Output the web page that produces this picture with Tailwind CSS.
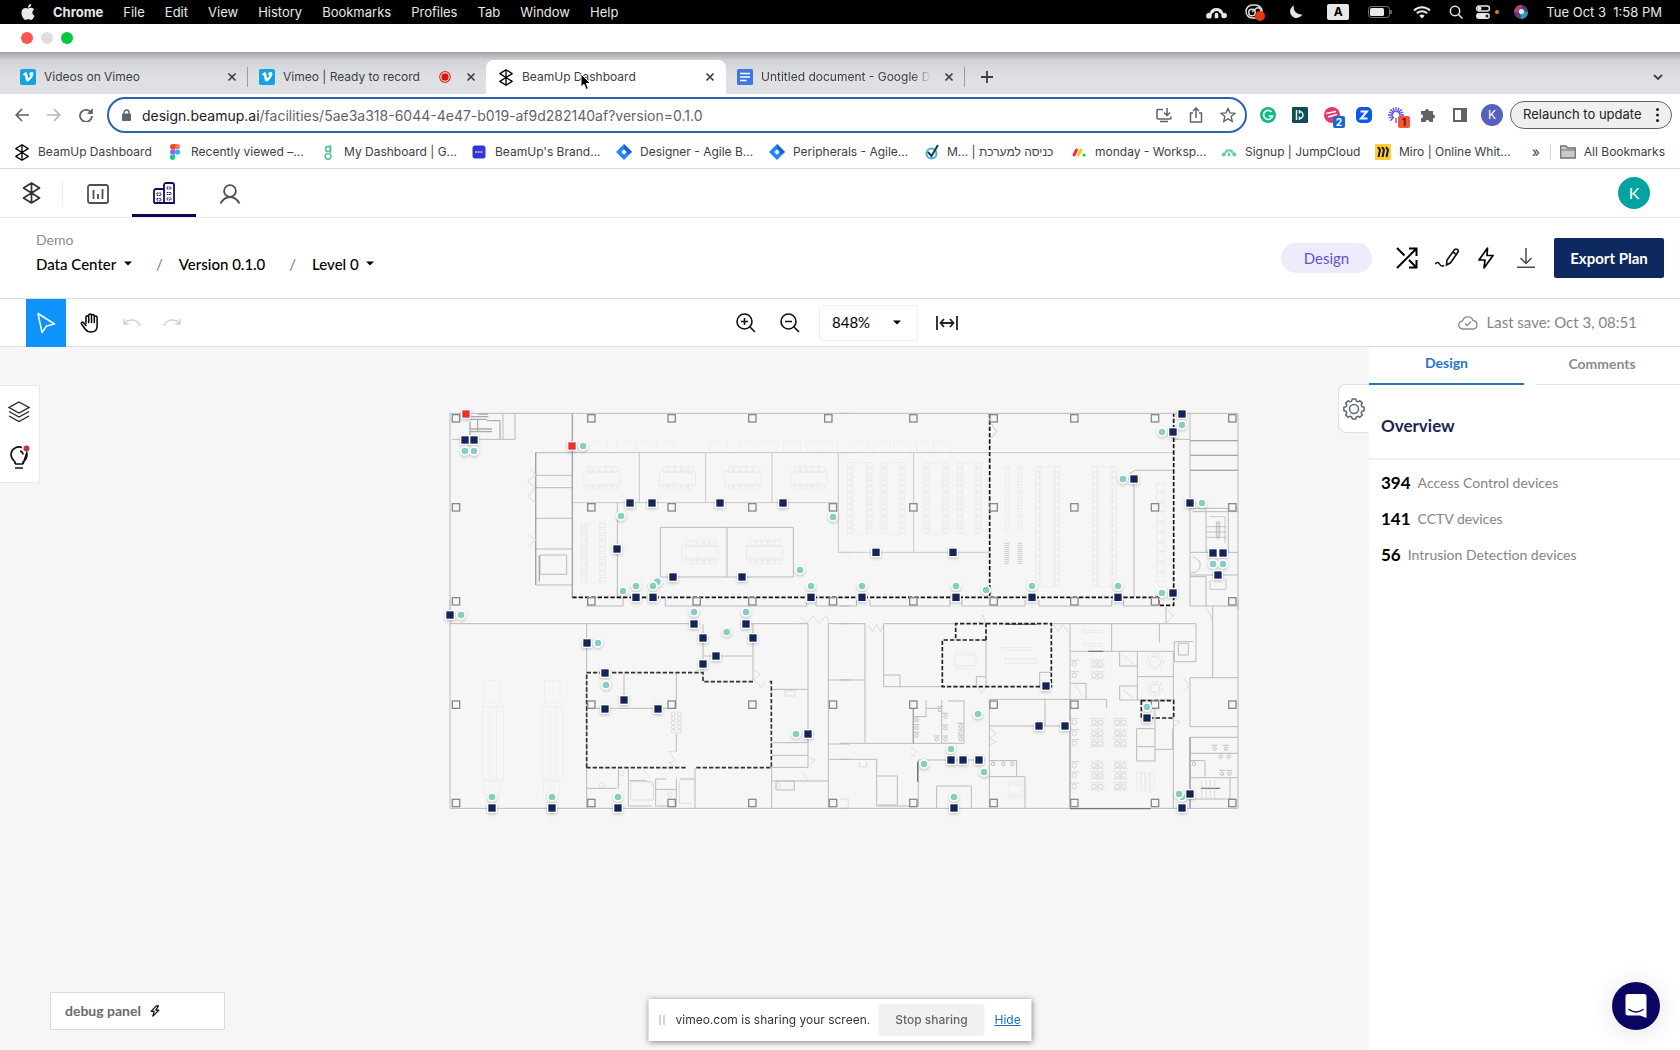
<!DOCTYPE html>
<html lang="en">
<head>
<meta charset="utf-8">
<title>BeamUp Dashboard</title>
<script src="https://cdn.jsdelivr.net/npm/@tailwindcss/browser@4"></script>
</head>
<body class="flex min-h-screen flex-col overflow-hidden bg-white font-['Inter',sans-serif] text-[#3c4043]">
<svg class="hidden">
  <symbol id="beam" viewBox="0 0 18 22"><path d="M9 1 17 6 9 11 17 16 9 21 1 16 9 11 1 6ZM9 1V21" fill="none" stroke="currentColor" stroke-width="1.7" stroke-linejoin="round"/></symbol>
  <symbol id="close" viewBox="0 0 10 10"><path d="M1.5 1.5 8.500 8.500M8.500 1.500 1.500 8.500" stroke="currentColor" stroke-width="1.7"/></symbol>
  <symbol id="caret" viewBox="0 0 10 6"><path d="M0 .5H10L5 5.500Z" fill="currentColor"/></symbol>
  <symbol id="vimeo" viewBox="0 0 16 16"><rect width="16" height="16" rx="2" fill="#0ea5e0"/><path transform="translate(2.600 2.400) scale(.45)" fill="#fff" d="M23.976 6.417c-.105 2.338-1.739 5.543-4.894 9.609-3.268 4.247-6.026 6.370-8.290 6.370-1.409 0-2.578-1.294-3.553-3.881l-1.918-7.114c-.719-2.584-1.488-3.878-2.312-3.878-.179 0-.806.378-1.881 1.132l-1.129-1.457a315 315 0 003.501-3.128c1.579-1.368 2.765-2.085 3.554-2.159 1.867-.18 3.016 1.100 3.447 3.838.465 2.953.789 4.789.971 5.507.539 2.450 1.131 3.674 1.776 3.674.502 0 1.256-.796 2.265-2.385 1.004-1.589 1.540-2.797 1.612-3.628.144-1.371-.395-2.061-1.614-2.061-.574 0-1.167.121-1.777.391 1.186-3.868 3.434-5.757 6.762-5.637 2.473.060 3.628 1.664 3.493 4.797z"/></symbol>
  <symbol id="jira" viewBox="0 0 16 16"><path d="M8 0 16 8 8 16 0 8Z" fill="#2684ff"/><path d="M8 0 16 8 12 10 8 5Z" fill="#1463d8"/><path d="M8 5.300 10.700 8 8 10.700 5.300 8Z" fill="#fff"/></symbol>
  <symbol id="cloud" viewBox="0 0 22 13"><path d="M1 10a2.600 2.600 0 0 1 3.500-2.500A6.800 6.800 0 0 1 17.500 7.500 2.600 2.600 0 1 1 18 12.500 2.600 2.600 0 0 1 15.500 10 1.700 1.700 0 0 0 14 7.500 3 3 0 0 0 11 5.500 3 3 0 0 0 8 7.500 1.700 1.700 0 0 0 6.500 10 2.600 2.600 0 0 1 1 10ZM9.300 9a1.700 1.700 0 0 1 3.400 0V12.500H9.300Z" fill="currentColor"/></symbol>
</svg>

<!-- System menu bar -->
<header class="flex h-6 items-center justify-between bg-black pl-5 pr-[18px] text-[13px] leading-[22px] text-[#e8e8e8]">
  <nav class="flex items-center gap-5">
    <svg class="-mr-[3px] h-4 w-4" viewBox="0 0 24 24" fill="#e8e8e8"><path d="M12.152 6.896c-.948 0-2.415-1.078-3.960-1.040-2.040.027-3.910 1.183-4.961 3.014-2.117 3.675-.546 9.103 1.519 12.090 1.013 1.454 2.208 3.090 3.792 3.039 1.520-.065 2.090-.987 3.935-.987 1.831 0 2.350.987 3.960.948 1.637-.026 2.676-1.480 3.676-2.948 1.156-1.688 1.636-3.325 1.662-3.415-.039-.013-3.182-1.221-3.220-4.857-.026-3.040 2.480-4.494 2.597-4.559-1.429-2.090-3.623-2.324-4.390-2.376-2-.156-3.675 1.090-4.610 1.090zM15.530 3.830c.843-1.012 1.400-2.427 1.245-3.830-1.207.052-2.662.805-3.532 1.818-.780.896-1.454 2.338-1.273 3.714 1.338.104 2.715-.688 3.559-1.701"/></svg>
    <button class="font-bold">Chrome</button><button>File</button><button>Edit</button><button>View</button><button>History</button><button>Bookmarks</button><button>Profiles</button><button>Tab</button><button>Window</button><button>Help</button>
  </nav>
  <div class="flex items-center">
    <svg class="mr-4 h-[14px] w-[23px]"><use href="#cloud"/></svg>
    <svg class="mr-[22px] h-5 w-[22px]" viewBox="0 0 22 20" fill="none" stroke="#ddd" stroke-width="1.500"><rect x="2" y="3" width="16" height="13" rx="6.500"/><circle cx="8" cy="10.500" r="3.300"/><path d="M8 10 12 6.500a3 3 0 0 1 4 4.500"/><circle cx="16" cy="14" r="5" fill="#e8380d" stroke="none"/></svg>
    <svg class="mr-[23px] h-4 w-4" viewBox="0 0 16 16"><path d="M6 1.500a6.500 6.500 0 1 0 8.500 8.700A7 7 0 0 1 6 1.500Z" fill="#e8e8e8"/></svg>
    <span class="mr-[19px] flex h-4 w-[22px] items-center justify-center rounded-xs bg-[#e8e8e8] text-xs font-bold text-black">A</span>
    <svg class="mr-5 h-3 w-[25px]" viewBox="0 0 25 12"><rect x=".5" y=".5" width="21" height="11" rx="3" fill="none" stroke="#777"/><rect x="2" y="2" width="14" height="8" rx="1.500" fill="#e8e8e8"/><path d="M23 4v4" stroke="#777" stroke-width="1.500"/></svg>
    <svg class="mr-[18px] h-[14px] w-[18px]" viewBox="0 0 18 14" fill="none" stroke="#e8e8e8" stroke-width="2"><path d="M1 5.500a11.500 11.500 0 0 1 16 0M3.800 8.300a7.500 7.500 0 0 1 10.400 0"/><path d="M9 13.500 6.300 10.700a4 4 0 0 1 5.400 0Z" fill="#e8e8e8" stroke="none"/></svg>
    <svg class="mr-3 h-[14px] w-[14px]" viewBox="0 0 14 14" fill="none" stroke="#e8e8e8" stroke-width="1.500"><circle cx="6" cy="6" r="4.700"/><path d="m9.500 9.500 4 4"/></svg>
    <svg class="mr-3 h-[14px] w-[27px]" viewBox="0 0 27 14"><rect x="1.500" y="1" width="13" height="5" rx="2.500" fill="none" stroke="#e8e8e8" stroke-width="1.400"/><circle cx="4.500" cy="3.500" r="2" fill="#e8e8e8"/><rect x="1" y="8" width="14" height="6" rx="3" fill="#e8e8e8"/><circle cx="12" cy="11" r="1.500" fill="#222"/><circle cx="22" cy="7" r="2" fill="#d9820f"/></svg>
    <svg class="mr-[18px] h-[14px] w-[14px]" viewBox="0 0 14 14"><circle cx="7" cy="7" r="7" fill="#5b3a7a"/><path d="M0 7a7 7 0 0 1 8-7L6 8Z" fill="#ad4667"/><path d="M7 14a7 7 0 0 0 7-7L6 6Z" fill="#2b9eb3"/><circle cx="7.500" cy="6.500" r="2.600" fill="#d8f3f5"/></svg>
    <time class="whitespace-pre">Tue Oct 3  1:58 PM</time>
  </div>
</header>

<!-- Window title bar -->
<div class="flex h-7 items-center gap-2 pl-[21px]">
  <button aria-label="Close window" class="h-3 w-3 rounded-full bg-[#ff544d]"></button>
  <button aria-label="Minimise window" class="h-3 w-3 rounded-full bg-[#dedede]"></button>
  <button aria-label="Zoom window" class="h-3 w-3 rounded-full bg-[#05c63c]"></button>
</div>

<!-- Browser tabs -->
<div role="tablist" class="flex h-[42px] items-end bg-linear-to-b from-[#a3a4a7] from-0% via-[#d2d3d6] via-20% to-[#dee0e4] to-60% pl-2 text-xs">
  <div role="tab" class="flex h-[34px] w-[240px] items-center pl-3">
    <svg class="h-4 w-4"><use href="#vimeo"/></svg><span class="ml-2 flex-1">Videos on Vimeo</span>
    <button aria-label="Close tab" class="mr-[10px]"><svg class="h-[10px] w-[10px]"><use href="#close"/></svg></button><i class="h-5 w-px bg-[#9a9ca0]"></i>
  </div>
  <div role="tab" class="flex h-[34px] w-[238px] items-center pl-[11px]">
    <svg class="h-4 w-4"><use href="#vimeo"/></svg><span class="ml-2 flex-1">Vimeo | Ready to record</span>
    <svg class="mr-[15px] h-3 w-3" viewBox="0 0 12 12"><circle cx="6" cy="6" r="5.300" fill="#fff" stroke="#d93025" stroke-width="1.200"/><circle cx="6" cy="6" r="3.700" fill="#d5160c"/></svg>
    <button aria-label="Close tab" class="mr-[10px]"><svg class="h-[10px] w-[10px]"><use href="#close"/></svg></button>
  </div>
  <div role="tab" aria-selected="true" class="flex h-[34px] w-[240px] items-center rounded-t-lg bg-white pl-3">
    <svg class="h-[17px] w-4 text-black"><use href="#beam"/></svg><span class="ml-2 flex-1">BeamUp Dashboard</span>
    <button aria-label="Close tab" class="mr-[11px]"><svg class="h-[10px] w-[10px]"><use href="#close"/></svg></button>
  </div>
  <div role="tab" class="flex h-[34px] w-[240px] items-center pl-[11px]">
    <svg class="h-4 w-4" viewBox="0 0 16 16"><rect width="16" height="16" rx="1.500" fill="#3f78e0"/><path d="M3 4.500H13M3 8H13M3 11.500H9.500" stroke="#fff" stroke-width="1.700"/></svg>
    <span class="ml-2 mr-3 w-[171px] whitespace-nowrap mask-r-from-88%">Untitled document - Google D</span>
    <button aria-label="Close tab" class="mr-[10px]"><svg class="h-[10px] w-[10px]"><use href="#close"/></svg></button><i class="h-5 w-px bg-[#9a9ca0]"></i>
  </div>
  <button aria-label="New tab" class="mb-[11px] ml-[15px]"><svg class="h-3 w-3" viewBox="0 0 12 12"><path d="M6 0V12M0 6H12" stroke="#3c4043" stroke-width="1.800"/></svg></button>
  <button aria-label="Search tabs" class="mb-3 ml-auto mr-[17px]"><svg class="h-[10px] w-[10px]" viewBox="0 0 10 10"><path d="m1 3 4 4 4-4" fill="none" stroke="#3c4043" stroke-width="1.800"/></svg></button>
</div>

<!-- Address row -->
<div class="flex h-[42px] items-center pl-[15px] pr-2 text-[#5f6368]">
  <button aria-label="Back" class="mr-[18px]"><svg class="h-[14px] w-[14px]" viewBox="0 0 14 14" fill="none" stroke="currentColor" stroke-width="1.700"><path d="M14 7H1.500M7 1 1.200 7 7 13"/></svg></button>
  <button aria-label="Forward" class="mr-[18px] text-[#b5b7ba]"><svg class="h-[14px] w-[14px]" viewBox="0 0 14 14" fill="none" stroke="currentColor" stroke-width="1.700"><path d="M0 7H12.500M7 1 12.800 7 7 13"/></svg></button>
  <button aria-label="Reload" class="mr-[14px]"><svg class="h-[14px] w-[14px]" viewBox="0 0 14 14"><path d="M12 4.500A6 6 0 1 0 13 8" fill="none" stroke="currentColor" stroke-width="1.800"/><path d="M13.800 0V6H8Z" fill="currentColor"/></svg></button>
  <div class="flex h-9 flex-1 items-center rounded-full border-2 border-[#2b63b0] bg-white pl-[13px] pr-[9px] text-[14px]">
    <svg class="mr-[11px] h-3 w-[9px]" viewBox="0 0 9 12"><rect y="4.500" width="9" height="7.500" rx="1" fill="#5f6368"/><path d="M2 5V3.500a2.500 2.500 0 0 1 5 0V5" fill="none" stroke="#5f6368" stroke-width="1.400"/></svg>
    <label for="url" class="text-[#202124]">design.beamup.ai</label><input id="url" class="min-w-0 flex-1 text-[#5f6368] outline-none" value="/facilities/5ae3a318-6044-4e47-b019-af9d282140af?version=0.1.0">
    <div class="flex items-center gap-4">
      <svg class="h-4 w-4" viewBox="0 0 16 16" fill="none" stroke="currentColor" stroke-width="1.500"><path d="M7 2.500H2a1 1 0 0 0-1 1V11a1 1 0 0 0 1 1H14a1 1 0 0 0 1-1V9.500M4 14.500H12M11 1V8M8 5.500 11 8.500 14 5.500"/></svg>
      <svg class="h-4 w-4" viewBox="0 0 16 16" fill="none" stroke="currentColor" stroke-width="1.500"><path d="M5 6H2.500V15H13.500V6H11M8 11V1.500M5 4 8 1 11 4"/></svg>
      <svg class="h-4 w-4" viewBox="0 0 16 16" fill="none" stroke="currentColor" stroke-width="1.400"><path d="m8 1.500 2 4.400 4.800.5-3.600 3.200 1 4.700L8 11.900l-4.200 2.400 1-4.700L1.200 6.400 6 5.900Z"/></svg>
    </div>
  </div>
  <div class="flex items-center gap-4 pl-[13px]">
    <svg class="h-4 w-4" viewBox="0 0 16 16"><circle cx="8" cy="8" r="8" fill="#11b981"/><path d="M11.500 5A4.500 4.500 0 1 0 12.500 9H8.500" fill="none" stroke="#fff" stroke-width="1.700"/></svg>
    <svg class="h-4 w-4" viewBox="0 0 16 16"><rect width="16" height="16" rx="1" fill="#0d4f58"/><path d="M4.500 3V13M7.500 3V6.500M7.500 9.500V13M7.500 4.500A3.500 3.500 0 0 1 7.500 11.500" fill="none" stroke="#e6f2f2" stroke-width="1.500"/></svg>
    <div class="relative h-4 w-4"><svg class="h-4 w-4" viewBox="0 0 16 16"><circle cx="8" cy="8" r="8" fill="#e6386b"/><path d="M2 6.500 12 4.500M4 10 13 7.500" stroke="#fff" stroke-width="1.500"/></svg><b class="absolute left-[9px] top-[9px] h-3 w-3 rounded-xs bg-[#1967d2] text-center text-[10px] leading-3 text-white">2</b></div>
    <svg class="h-4 w-4" viewBox="0 0 16 16"><rect width="16" height="16" rx="5" fill="#0b57e8"/><path d="M4.500 4.500H11L5 11.500H11.500" fill="none" stroke="#fff" stroke-width="2"/></svg>
    <div class="relative h-4 w-4"><svg class="h-4 w-4" viewBox="0 0 16 16"><path d="M8 0V5M8 11V16M0 8H5M11 8H16M2.300 2.300 6 6M10 10 13.700 13.700M13.700 2.300 10 6M2.300 13.700 6 10M5 .8 6.700 5.200M11 .8 9.300 5.200M.8 5 5.200 6.700M.8 11 5.200 9.300M15.200 5 10.800 6.700" stroke="#5b4bdb" stroke-width="1.300"/></svg><b class="absolute left-[10px] top-[9px] h-3 w-3 rounded-xs bg-[#f4563b] text-center text-[10px] leading-3 text-[#5d1408]">1</b></div>
    <svg class="h-4 w-4" viewBox="0 0 16 16"><path d="M1 4H5a2 2 0 1 1 4 0H13V7.500a2 2 0 1 1 0 4V15H9.500a2 2 0 1 0-4 0H1V11.200a2 2 0 1 0 0-4Z" fill="#5f6368"/></svg>
    <svg class="h-[14px] w-4" viewBox="0 0 16 14"><rect x="2" y="1" width="12" height="12" fill="none" stroke="#5f6368" stroke-width="2"/><path d="M9 0H15V14H9Z" fill="#5f6368"/></svg>
    <span class="-mx-[3px] flex h-[22px] w-[22px] items-center justify-center rounded-full bg-[#5562bd] text-xs text-white">K</span>
  </div>
  <button class="ml-[10px] flex h-7 w-[162px] items-center justify-between rounded-full border border-[#5f6368] bg-[#efefef] pl-3 pr-3 text-[13px] text-[#202124]">Relaunch to update<svg class="h-[14px] w-[3px]" viewBox="0 0 3 14"><path d="M1.500 1.500V1.600M1.500 7V7.100M1.500 12.500V12.600" stroke="#202124" stroke-width="3" stroke-linecap="round"/></svg></button>
</div>

<!-- Bookmarks -->
<nav class="flex h-[33px] items-center justify-between border-b border-[#dadce0] pl-[14px] pr-[15px] text-xs whitespace-nowrap">
  <div class="grid grid-cols-[153px_153px_151px_145px_153px_156px_146px_150px_154px_150px]">
    <a href="#" class="flex items-center gap-2"><svg class="h-[17px] w-4 text-black"><use href="#beam"/></svg>BeamUp Dashboard</a>
    <a href="#" class="flex items-center gap-2"><svg class="h-4 w-4" viewBox="0 0 16 16"><path d="M8 0H5.700a2.600 2.600 0 0 0 0 5.300H8Z" fill="#f24e1e"/><path d="M8 0h2.300a2.600 2.600 0 0 1 0 5.300H8Z" fill="#ff7262"/><path d="M8 5.300H5.700a2.600 2.600 0 0 0 0 5.300H8Z" fill="#a259ff"/><circle cx="10.600" cy="8" r="2.600" fill="#1abcfe"/><path d="M8 10.700H5.700A2.600 2.600 0 1 0 8 13.300Z" fill="#0acf83"/></svg>Recently viewed –...</a>
    <a href="#" class="flex items-center gap-2"><svg class="h-4 w-4" viewBox="0 0 16 16" fill="none" stroke="#52bd95" stroke-width="1.500"><circle cx="8" cy="5" r="2.500"/><circle cx="8" cy="12.300" r="2.900"/><path d="M10.500 1V9"/></svg>My Dashboard | G...</a>
    <a href="#" class="flex items-center gap-2"><svg class="h-4 w-4" viewBox="0 0 16 16"><rect x="1.500" y="1.500" width="13" height="13" rx="2.500" fill="#3437cf"/><path d="M4 8H12" stroke="#c9caff" stroke-width="1.600" stroke-dasharray="2 .7"/></svg>BeamUp's Brand...</a>
    <a href="#" class="flex items-center gap-2"><svg class="h-4 w-4"><use href="#jira"/></svg>Designer - Agile B...</a>
    <a href="#" class="flex items-center gap-2"><svg class="h-4 w-4"><use href="#jira"/></svg>Peripherals - Agile...</a>
    <a href="#" class="flex items-center gap-1.5"><svg class="h-4 w-4" viewBox="0 0 16 16"><circle cx="6.500" cy="9.500" r="5" fill="none" stroke="#3fb5d0" stroke-width="2"/><path d="m3 8 3.500 4L13 1" fill="none" stroke="#263544" stroke-width="2"/></svg>M... | כניסה למערכת</a>
    <a href="#" class="flex items-center gap-2"><svg class="h-4 w-4" viewBox="0 0 16 16" stroke-width="3" stroke-linecap="round"><path d="m3 11 2.500-5" stroke="#f62b54"/><path d="m7.500 11 2.500-5" stroke="#fc0"/><path d="M13 11V10.900" stroke="#00ca72"/></svg>monday - Worksp...</a>
    <a href="#" class="flex items-center gap-2"><svg class="h-4 w-4 text-[#63c7b2]"><use href="#cloud"/></svg>Signup | JumpCloud</a>
    <a href="#" class="flex items-center gap-2"><svg class="h-4 w-4" viewBox="0 0 16 16"><rect width="16" height="16" rx="1" fill="#ffd02f"/><path d="m3 3 2 3-1.500 7M7 3l2 3-1.500 7M11 3l2 3-1.500 7" fill="none" stroke="#1a1526" stroke-width="2"/></svg>Miro | Online Whit...</a>
  </div>
  <div class="flex items-center">
    <button class="mr-[10px] text-sm leading-4">»</button><i class="mr-[9px] h-4 w-px bg-[#d5d7da]"></i>
    <svg class="mr-2 h-[14px] w-4" viewBox="0 0 16 14"><path d="M.7 1H6L7.500 3H15.300V13H.7Z" fill="#c9cacc" stroke="#6f7377" stroke-width="1.300"/><path d="M1 5H15" stroke="#6f7377"/></svg>
    <a href="#">All Bookmarks</a>
  </div>
</nav>

<div class="flex flex-1 flex-col font-['Lato',sans-serif] text-black">
  <!-- App navigation -->
  <nav class="flex h-[49px] items-center border-b border-[#e9e9eb] pl-[22px] pr-[30px]">
    <a href="#" aria-label="BeamUp home"><svg class="h-[22px] w-[19px] text-[#333]"><use href="#beam"/></svg></a>
    <i class="ml-[21px] mr-[3px] h-7 w-px bg-[#ececec]"></i>
    <a href="#" aria-label="Reports" class="flex h-full w-16 items-center justify-center pt-0.5"><svg class="h-5 w-[22px]" viewBox="0 0 22 20" fill="none" stroke="#505050" stroke-width="1.800"><rect x="1" y="1" width="20" height="18" rx="2"/><path d="M6.500 6V15M11 10V15M15.500 5V15"/></svg></a>
    <a href="#" aria-label="Facilities" class="ml-[2px] flex h-full w-16 items-center justify-center border-b-3 border-[#0b0654] pt-[3px]"><svg class="h-[22px] w-[22px]" viewBox="0 0 22 22" fill="none" stroke="#120a66" stroke-width="1.800"><path d="M1 21V9a2 2 0 0 1 2-2H11M11 21V3a2 2 0 0 1 2-2h6a2 2 0 0 1 2 2V21H1"/><path d="M4 11H8V13.500H4ZM4 16.500H8V19H4ZM14 5H18V7H14ZM14 10.500H18V12.500H14ZM14 16H18V18H14Z" stroke-width="1" stroke-dasharray="1.500 .8"/></svg></a>
    <a href="#" aria-label="Profile" class="ml-[2px] flex h-full w-16 items-center justify-center pt-0.5"><svg class="h-5 w-[22px]" viewBox="0 0 22 20" fill="none" stroke="#505050" stroke-width="1.800"><circle cx="11" cy="7" r="5.900"/><path d="M1.500 19.500C4 15 7.500 13 11 13s7 2 9.500 6.500"/></svg></a>
    <button class="ml-auto h-8 w-8 rounded-full bg-[#02a3a0] text-base text-white">K</button>
  </nav>

  <!-- Facility header -->
  <div class="flex h-[81px] items-center justify-between border-b border-[#dfdfe0] pl-9 pr-4">
    <div class="mb-[13px] flex items-end text-[15px] font-medium leading-5">
      <div>
        <label for="facility" class="block pb-1 text-sm font-normal text-[#8b8b8b]">Demo</label>
        <div class="relative flex w-24 items-center"><select id="facility" class="w-full appearance-none outline-none"><option>Data Center</option></select><svg class="pointer-events-none absolute right-0 h-[5px] w-2"><use href="#caret"/></svg></div>
      </div>
      <span class="ml-6 mr-4 font-normal text-[#777]">/</span><span>Version 0.1.0</span><span class="ml-6 mr-4 font-normal text-[#777]">/</span>
      <div class="relative flex w-[62px] items-center"><select aria-label="Level" class="w-full appearance-none outline-none"><option>Level 0</option></select><svg class="pointer-events-none absolute right-0 h-[5px] w-2"><use href="#caret"/></svg></div>
    </div>
    <div class="flex items-center">
      <span class="mr-6 flex h-[30px] w-[91px] items-center justify-center rounded-full bg-[#eeebfd] text-[15px] text-[#6552c4]">Design</span>
      <button aria-label="Shuffle" class="mr-[17px]"><svg class="h-[22px] w-[22px]" viewBox="0 0 22 22" fill="none" stroke="#000" stroke-width="2"><path d="M1 21 20 2M13 1.500H20.500V9M1 1 8.500 8.500M13 13 20 20M13 20.500H20.500V13"/></svg></button>
      <button aria-label="Draw" class="mr-[19px]"><svg class="h-5 w-6" viewBox="0 0 24 20" fill="none" stroke="#111" stroke-width="1.600"><path d="M0 16c2-2 3.500-2 4.500 0s2.500 2.500 4.500 1.500M11.500 17l.5-5L19.500 1.800c1-1 2-1 3-.2s1 2 .2 3L15.500 14.800ZM18 4l3 2.300"/></svg></button>
      <button aria-label="Run" class="mr-[23px]"><svg class="h-[22px] w-4" viewBox="0 0 16 22" fill="none" stroke="#000" stroke-width="1.700" stroke-linejoin="round"><path d="M9.500 1 1 13H7L6 21 15 8.500H9Z"/></svg></button>
      <button aria-label="Download" class="mr-[19px]"><svg class="h-5 w-[18px]" viewBox="0 0 18 20" fill="none" stroke="#4a4a4a" stroke-width="1.500"><path d="M9 0V15M3.500 10 9 15.500 14.500 10M0 19.200H18"/></svg></button>
      <button class="h-10 w-[110px] rounded-xs bg-[#0e2860] text-[15px] font-bold text-white">Export Plan</button>
    </div>
  </div>

  <!-- Canvas toolbar -->
  <div class="grid h-12 grid-cols-3 items-center border-b border-[#dfdfe0] pl-[26px]">
    <div class="flex h-full items-center">
      <button aria-label="Select" class="-mb-px mr-[14px] flex h-12 w-10 items-center justify-center bg-[#0d93fb]"><svg class="h-[22px] w-5" viewBox="0 0 20 22"><path d="M2 1.500 18.500 12 10.500 14 6 20.500Z" fill="none" stroke="#fff" stroke-width="1.500" stroke-linejoin="round"/></svg></button>
      <button aria-label="Pan" class="mr-[23px]"><svg class="h-5 w-5" viewBox="0 0 20 20" fill="none" stroke="#000" stroke-width="1.500" stroke-linecap="round" stroke-linejoin="round"><path d="M6 10V4a1.300 1.300 0 0 1 2.700 0V2.300a1.300 1.300 0 0 1 2.800 0V3a1.300 1.300 0 0 1 2.800 0V4.500a1.300 1.300 0 0 1 2.800 0V13c0 4-2.500 6-6 6-3 0-4.500-1-6-3L1.500 11c-.8-1.500 1-2.500 2-1.500L6 12.500M8.700 3.500V9.500M11.500 3V9.500M14.300 4V9.500"/></svg></button>
      <button aria-label="Undo" disabled class="mr-[22px]"><svg class="h-[10px] w-[18px]" viewBox="0 0 18 10" fill="none" stroke="#d2d2d2" stroke-width="1.500"><path d="M1 1V6H6M1.500 5.500C5 1 14 0 17 8"/></svg></button>
      <button aria-label="Redo" disabled><svg class="h-[10px] w-[18px]" viewBox="0 0 18 10" fill="none" stroke="#d2d2d2" stroke-width="1.500"><path d="M17 1V6H12M16.500 5.500C13 1 4 0 1 8"/></svg></button>
    </div>
    <div class="flex items-center justify-center pr-3">
      <button aria-label="Zoom in" class="mr-6"><svg class="h-5 w-5" viewBox="0 0 20 20" fill="none" stroke="#111" stroke-width="1.600"><circle cx="8.500" cy="8.500" r="7.500"/><path d="m14 14 5 5M8.500 5V12M5 8.500H12"/></svg></button>
      <button aria-label="Zoom out" class="mr-[19px]"><svg class="h-5 w-5" viewBox="0 0 20 20" fill="none" stroke="#111" stroke-width="1.600"><circle cx="8.500" cy="8.500" r="7.500"/><path d="m14 14 5 5M5 8.500H12"/></svg></button>
      <div class="relative mr-[18px] flex h-9 w-[99px] items-center rounded-xs border border-[#ededed]"><select aria-label="Zoom level" class="h-full w-full appearance-none pl-3 text-[15px] outline-none"><option>848%</option></select><svg class="pointer-events-none absolute right-4 h-[5px] w-2"><use href="#caret"/></svg></div>
      <button aria-label="Fit width"><svg class="h-[14px] w-[22px]" viewBox="0 0 22 14" fill="none" stroke="#222" stroke-width="1.800"><path d="M1 0V14M21 0V14M4.500 7H17.500M8 3 4.500 7 8 11M14 3 17.500 7 14 11"/></svg></button>
    </div>
    <div class="flex items-center justify-end gap-2 pr-[43px] text-[15px] text-[#858585]">
      <svg class="h-[15px] w-5" viewBox="0 0 20 15" fill="none" stroke="#8b8b8b" stroke-width="1.400"><path d="M5 14a4 4 0 0 1-.5-8A5.500 5.500 0 0 1 15 5.500 4.300 4.300 0 0 1 15.500 14ZM7 8.500 9.300 10.500 13 6.500"/></svg>Last save: Oct 3, 08:51
    </div>
  </div>

  <main class="flex min-h-[703px] flex-1">
    <section class="relative flex-1 bg-[#f6f6f6]">
      <svg id="plan" class="absolute left-[440px] top-[53px] h-[420px] w-[820px]" viewBox="0 0 2460 1260" fill="none" stroke-width="3">
        <g id="furniture" stroke="#e6e6e6" stroke-width="2"></g>
        <g stroke="#bbb">
          <path d="M30 40H1230M30 40V630M225 40V118H36M189 42V118M397 158H287V555H397M287 226H397M287 263H397M287 355H397M287 447H397M300 465H380V523H300ZM532 308V592M661 382H1060V531H661ZM861 382V531M438 618H549V595M676 595V618H1100V600M1128 600V618H1230"/>
          <path d="M397 158H1230M397 308H1195M598 158V308M797 158V308M996 158V308M1195 158V457H1230" stroke="#c8c8c8"/>
          <path d="M397 40V592M287 158V555" stroke-width="4" stroke="#a3a3a3"/>
          <path d="M113 60V95M140 62H180V118" stroke="#999"/>
          <path d="M90 50H145M90 58H140M90 87H156M90 95H156M115 42H145M90 65V118M298 465V545" stroke="#aaa" stroke-width="4"/>
          <path d="M272 205 287 226 262 245 285 262 265 290 287 310M265 405 287 420 265 440" stroke="#ddd"/>
          <g transform="translate(1200 0)">
            <path d="M0 40H1194V630M1000 118H1050M1050 40V460M1050 122H1194M1050 166H1194M1050 211H1194M882 250V592M868 222 885 211H1000M1050 325H1194M1058 335H1194M1098 325V457M1165 325V457M1050 457H1194M1050 525H1194M1050 460V618H1194M1098 530V618M1050 530H1098M0 618H50V600M90 600V618H330V600M366 600V618H555V600M597 600V618H815V600M851 600V618H955"/>
            <path d="M0 158H1000M221 158V457M0 457H448M453 70 470 95 453 115M1110 350H1155V430M1110 540V568H1158V535" stroke="#c9c9c9"/>
            <path d="M1050 122H1194M1050 166H1194M1050 211H1194" stroke="#a8a8a8" stroke-width="4"/>
            <path d="M1129 366H1139V412H1129ZM1134 366V420M1100 380H1160M1100 396H1160M1100 412H1160M1058 470Q1085 480 1080 500T1050 518" stroke-width="2" stroke="#aaa"/>
          </g>
          <g transform="translate(0 600)">
            <path d="M30 0V625H1230M30 71H762M918 71H1104M1165 71H1230M1104 71V502H995M440 71V625M789 72V210M939 72V240M789 168H936M552 222V300M709 222V325H444M709 400V455M995 268H1104M995 428H1104M995 466H1104M1165 71V625M1165 240H1230M1165 432H1230M1165 478H1230M995 503V625M995 543H1165M440 565H530M535 505V565M565 505V620M647 537V620M765 505V625M568 542H620M647 537H680M709 537V620M647 568H707M720 537H765M1008 543H1063V570H1008ZM568 618H635M650 618H705"/>
            <path d="M685 455H709M690 460 705 480 688 490 709 503M1035 272H1065V288H1035ZM1080 50 1100 70 1120 48 1135 70 1160 46 1165 70M940 210 960 222 942 240 965 262 975 245M1104 470 1125 480 1104 500M1085 515 1105 543M545 512a6 8 0 1 0 1 0M485 548a8 8 0 1 0 1 0M690 575a6 8 0 1 0 1 0M610 510 628 530M620 542 645 562M1015 550a5 7 0 1 0 1 0M572 545H640V600H572ZM718 545V610H755" stroke="#d0d0d0" stroke-width="2"/>
          </g>
          <g transform="translate(1200 600)">
            <path d="M0 625H1194V0M0 71H75M131 71H347M75 71V430M131 71V260H307M0 240H75M0 430H372M0 478H110V618H235V480H435M448 298V625M634 71H690V300M690 71H1068V185H1003V125H1060M815 71V154M690 154H1000V300H892V154M892 230H1000M839 154V198H892M839 258V300H892M839 258H892M958 71V128M690 250H738V298M448 298H800V325M615 298V378M448 378H690M1000 352V625M1050 233V380H1194M1050 233H1194M1118 20V233M1050 412V625M1050 412H1194M1050 460H1194M1050 533H1194M1170 533V600M1050 597H1180M1050 482H1095V530M220 300V430M305 300V430M372 300V430M220 350H258V300M258 325H305M325 303H372M290 625V558H394V625M448 482H530V527M448 530H555V625M890 386H945V483H890V386M890 440H945M945 448H998V386M945 300V386M110 528H172V615H115M409 258V230H438M438 120V260M599 258V217H634M131 225H180V260M978 20V70M1015 130H1045V165H1015Z"/>
            <path d="M690 298V625M220 300V430M1050 412V625" stroke="#a3a3a3" stroke-width="4"/>
            <path d="M690 626H932M1082 565H1140M495 73H590M745 154H790M233 485V545" stroke="#777" stroke-width="4"/>
            <path d="M85 75 97 95 110 73 122 95 130 73M640 75 655 95 668 73 683 95M1095 20 1110 42 1118 70M980 25 1000 48 980 68M1030 235 1050 255 1030 275M1000 360 1020 365 1000 380M412 260 425 280 435 262M415 70 430 45 435 70M450 385 468 400 450 415 468 425 450 435M212 440 230 455 212 475M1085 540V597M1098 540V597M1111 540V597M1124 540V597M850 165 880 190M850 270 880 295M700 250 730 290M58 485V500H80V485M0 597H25V620" stroke="#cfcfcf" stroke-width="2"/>
          </g>
        </g>
        <g stroke="#111" stroke-width="4" stroke-dasharray="13 6">
          <path d="M397 592H2156V616H2201V42M1649 42V592" stroke-width="5"/>
          <path d="M440 1103V818H789V845H942M989 845H994V1103H765M737 1103H440" stroke="#333" stroke-width="5"/>
          <path d="M1638 720V671H1547V720M1638 720H1507V860H1834V671H1638M2104 902H2201V954H2104Z" stroke="#222" stroke-width="5"/>
        </g>
        <g id="columns" stroke="#8a8a8a" stroke-width="4" fill="#f6f6f6"></g>
        <g id="devices" class="drop-shadow-[0_4px_4px_rgba(0,0,0,0.2)]"></g>
      </svg>

      <aside class="absolute left-0 top-[38px] flex h-[98px] w-10 flex-col items-center gap-[22px] border border-l-0 border-[#e8e8e8] bg-white pr-0.5 pt-[15px]">
        <button aria-label="Layers"><svg class="h-[22px] w-[22px]" viewBox="0 0 22 22" fill="none" stroke="#222" stroke-width="1.300"><path d="M11 1 21 6.500 11 12 1 6.500ZM1 10.500 11 16 21 10.500M1 15 11 20.500 21 15"/></svg></button>
        <button aria-label="Insights"><svg class="h-6 w-[22px]" viewBox="0 0 22 24" fill="none" stroke="#111" stroke-width="1.700"><path d="M7 19V17C5 15 3 13 3 9.500a8 8 0 0 1 11-7M18.800 8c.7 4-1.300 7-3.800 9V19ZM7 19H15M7 23H15M12 6a4 4 0 0 1 3 3.500"/><circle cx="18.500" cy="3.500" r="3" fill="#c8323b" stroke="none"/></svg></button>
      </aside>

      <button aria-label="Settings" class="absolute right-0 top-[37px] flex h-[49px] w-[31px] items-center justify-center rounded-l-lg border border-r-0 border-[#e0e0e2] bg-white"><svg class="h-[22px] w-[22px]" viewBox="0 0 22 22" fill="none" stroke="#5c6677" stroke-width="1.500"><circle cx="11" cy="11" r="4.500"/><path id="gear" stroke-linejoin="round"/></svg></button>

      <button class="absolute bottom-5 left-[50px] flex h-[38px] w-[175px] items-center gap-2 border border-[#dcdcdc] bg-white pl-[14px] text-sm font-bold text-[#6b6b6b]">debug panel<svg class="h-3 w-3" viewBox="0 0 14 14"><path d="M8.500 1 2.500 7.500H6L4.500 13 11.500 6H8L11 1Z" fill="none" stroke="#111" stroke-width="1.500" stroke-linejoin="round"/></svg></button>
    </section>

    <aside class="mb-0.5 w-[311px] bg-white">
      <div role="tablist" class="flex h-[38px] gap-3 text-sm font-bold">
        <button role="tab" class="w-[155px] border-b-2 border-[#2775b6] pb-1 text-[#1f76c9]">Design</button>
        <button role="tab" class="flex-1 border-b border-[#e2e2e2] pb-1 pr-3 text-[#8b8b8b]">Comments</button>
      </div>
      <h2 class="flex h-[75px] items-center border-b-2 border-[#edf1f1] px-3 pt-2 text-[17px] font-bold text-[#1d2452]">Overview</h2>
      <ul class="flex flex-col px-3 pt-[5px] text-sm text-[#858585]">
        <li class="flex h-9 items-center gap-[7px]"><b class="text-[17px] text-black">394</b>Access Control devices</li>
        <li class="flex h-9 items-center gap-[7px]"><b class="text-[17px] text-black">141</b>CCTV devices</li>
        <li class="flex h-9 items-center gap-[7px]"><b class="text-[17px] text-black">56</b>Intrusion Detection devices</li>
      </ul>
    </aside>
  </main>
</div>

<!-- Screen sharing bar -->
<div class="fixed bottom-[9px] left-1/2 flex h-[42px] w-[383px] -translate-x-1/2 items-center bg-white pl-[11px] text-xs text-[#333] shadow-[0_1px_6px_rgba(0,0,0,0.5)]">
  <i class="mr-[11px] h-[10px] w-[5px] border-x border-[#aaa]"></i>
  <span class="w-[203px] whitespace-nowrap">vimeo.com is sharing your screen.</span>
  <button class="mr-[10px] h-8 w-[106px] rounded-sm bg-[#f1f1f1] font-medium text-[#666]">Stop sharing</button>
  <a href="#" class="text-[#1a6fc4] underline">Hide</a>
</div>

<button aria-label="Open chat" class="fixed bottom-5 right-5 flex h-12 w-12 items-center justify-center rounded-full bg-[#0a0560] shadow-[0_2px_24px_rgba(0,0,0,0.12)]"><svg class="h-6 w-[22px]" viewBox="0 0 22 24"><path d="M3 0H19a2.500 2.500 0 0 1 2.500 2.500V24L15 21.500H3A2.500 2.500 0 0 1 .5 19V2.500A2.500 2.500 0 0 1 3 0Z" fill="#fff"/><path d="M4 15.500Q11 20.500 18 15.500" fill="none" stroke="#0a0560" stroke-width="1.500" stroke-linecap="round"/></svg></button>

<svg class="fixed left-[580px] top-[73px] h-[18px] w-3" viewBox="0 0 12 18"><path d="M1 1V14L4 11.300 6 16.500 8.500 15.500 6.300 10.500H10.500Z" fill="#000" stroke="#fff"/></svg>

<script>
  const rect = (x, y, w, h, extra = '') => `<rect x="${x}" y="${y}" width="${w}" height="${h}" ${extra}/>`;

  // Structural columns
  const rows = { 55: [48,454,695,937,1165,1420,1661,1903,2145,2377], 322: [48,454,695,937,1179,1420,1661,1903,2145,2377], 604: [48,454,770,937,1179,1420,1661,1903,2145,2377], 914: [48,454,695,937,1179,1420,1661,1903,2145,2377], 1209: [48,454,695,937,1179,1420,1661,1903,2145,2377] };
  document.getElementById('columns').innerHTML = Object.entries(rows).map(([y, xs]) => xs.map(x => rect(x - 11, y - 11, 22, 22)).join('')).join('');

  // Furniture
  let f = '';
  const table = (x, y) => { f += rect(x, y + 14, 108, 44); for (let i = 0; i < 5; i++) f += rect(x + 10 + i * 19, y, 14, 18) + rect(x + 10 + i * 19, y + 52, 14, 18); };
  [[432,200],[659,200],[855,200],[1053,200],[726,422],[920,422]].forEach(t => table(...t));
  const bank = (x, y, n, w) => { f += rect(x + 12, y, w - 24, n * 18, 'stroke="#ececec"'); for (let i = 0; i < n; i++) f += rect(x, y + i * 18, 18, 13) + rect(x + w - 18, y + i * 18, 18, 13); };
  [[424,370,10,72],[1222,188,12,74],[1323,188,12,72],[1452,188,12,72],[1551,188,12,72],[1787,200,20,72],[1957,200,20,72]].forEach(b => bank(...b));
  for (let i = 0; i < 11; i++) f += rect(1695, 200 + i * 18, 12, 10) + rect(1733, 200 + i * 18, 12, 10);
  for (let i = 0; i < 11; i++) f += `<path stroke="#ccc" stroke-width="3" d="M1693 ${430 + i * 6}H1707M1733 ${430 + i * 6}H1747"/>`;
  for (let i = 0; i < 10; i++) f += rect(2150, 250 + i * 30, 24, 24);
  [450,530,590,650,810,900,960,1030,1100,1140,1230,1300,1360,1430,1480].forEach(x => f += rect(x, 125, 52, 30, 'stroke="#ececec"'));
  [[133,841,46,66],[314,841,46,66],[127,920,63,220],[306,920,63,220],[150,920,20,220],[330,920,20,220],[132,1143,48,42],[310,1143,48,42]].forEach(r => f += rect(...r, 'stroke="#eaeaea"'));
  for (let i = 0; i < 5; i++) f += `<g stroke="#ccc"><circle cx="700" cy="${942 + i * 13}" r="6"/><circle cx="718" cy="${942 + i * 13}" r="6"/></g>`;
  const desk = (x, y) => f += `<g stroke="#c4c4c4"><circle cx="${x - 10}" cy="${y}" r="7"/><circle cx="${x + 10}" cy="${y}" r="7"/><path stroke="#d8d8d8" d="M${x - 22} ${y - 12}H${x + 22}M${x} ${y - 14}V${y + 14}M${x - 22} ${y + 10}H${x + 22}"/></g>`;
  [792,826,967,1000,1030,1096,1127,1160].forEach(y => { desk(1972, y); f += `<g stroke="#c4c4c4"><circle cx="1903" cy="${y}" r="7"/><path d="M1892 ${y - 11}H1918"/></g>`; if (y > 900) desk(2041, y); });
  f += '<g stroke="#d4d4d4"><circle cx="2145" cy="785" r="17"/><circle cx="2145" cy="785" r="25" stroke-dasharray="9 6"/><circle cx="2145" cy="865" r="14"/><circle cx="2145" cy="865" r="22" stroke-dasharray="9 6"/></g>';
  f += rect(1543, 765, 65, 32) + rect(1695, 775, 95, 16) + rect(1685, 742, 90, 8) + rect(1930, 690, 55, 8) + rect(1930, 730, 55, 8) + rect(1707, 1155, 40, 28);
  for (let i = 0; i < 4; i++) f += `<circle cx="${1552 + i * 15}" cy="758" r="5"/><circle cx="${1552 + i * 15}" cy="804" r="5"/><circle cx="${1708 + i * 12}" cy="1147" r="5"/><circle cx="${1708 + i * 12}" cy="1192" r="5"/>`;
  [[1430,960],[1430,984],[1430,1007],[1516,950],[1516,985],[1516,1018],[1490,1018],[1562,980],[1562,1000],[1562,1018],[1500,930],[1659,1092],[1690,1092],[1717,1092],[2324,1046],[2358,1046],[2342,1070],[2366,1070],[2346,1121],[2368,1121],[2262,1092]].forEach(([x, y]) => f += `<g stroke="#a5a5a5"><circle cx="${x}" cy="${y}" r="5"/><path d="M${x - 9} ${y - 10}H${x + 9}"/></g>`);
  for (let i = 0; i < 4; i++) f += rect(2090 + i * 14, 1118, 10, 55);
  document.getElementById('furniture').innerHTML = f;

  // Devices: navy readers, red alarms, teal sensors
  const navy = [[75,120],[102,120],[570,309],[636,309],[840,309],[1029,309],[531,447],[699,531],[906,531],[588,592],[639,592],[1113,592],[2226,42],[2199,96],[2082,237],[2250,309],[1308,457],[1539,457],[2319,459],[2349,459],[2334,525],[1266,592],[1548,592],[1776,592],[2034,592],[2199,579],[30,645],[441,729],[762,672],[918,672],[789,714],[939,714],[828,768],[789,792],[495,819],[552,900],[495,927],[654,927],[1104,1002],[156,1224],[336,1224],[534,1224],[1818,858],[1797,978],[1875,978],[1533,1080],[1569,1080],[1617,1080],[2121,954],[1542,1224],[2250,1182],[2226,1224]];
  const red = [[78,42],[396,138]];
  const teal = [[75,153],[102,153],[429,138],[543,348],[1179,351],[1080,510],[1113,558],[652,545],[639,558],[588,558],[549,573],[2226,75],[2166,96],[2049,237],[2286,309],[1266,558],[1548,558],[1638,570],[1776,558],[2034,558],[2166,579],[2319,492],[2349,492],[63,645],[474,729],[762,636],[918,636],[860,696],[498,855],[1068,1002],[156,1191],[336,1191],[534,1191],[1614,942],[1533,1047],[1452,1092],[1632,1116],[1542,1191],[2121,921],[2226,1190],[2217,1182]];
  const box = c => ([x, y]) => rect(x - 15, y - 15, 30, 30, 'rx="2" fill="#fff"') + rect(x - 11, y - 11, 22, 22, `fill="${c}"`);
  document.getElementById('devices').innerHTML =
    teal.map(([x, y]) => `<circle cx="${x}" cy="${y}" r="15" fill="#fff"/><circle cx="${x}" cy="${y}" r="10" fill="#86cec2"/>`).join('') +
    navy.map(box('#14245a')).join('') + red.map(box('#ee2e35')).join('');

  // Gear outline: eight rounded teeth
  let d = '';
  for (let i = 0; i < 8; i++) [[-.28, 8.2], [-.17, 10.2], [.17, 10.2], [.28, 8.2]].forEach(([o, r]) => {
    const a = i * Math.PI / 4 + o;
    d += (d ? 'L' : 'M') + (11 + r * Math.cos(a)).toFixed(1) + ' ' + (11 + r * Math.sin(a)).toFixed(1);
  });
  document.getElementById('gear').setAttribute('d', d + 'Z');
</script>
</body>
</html>
